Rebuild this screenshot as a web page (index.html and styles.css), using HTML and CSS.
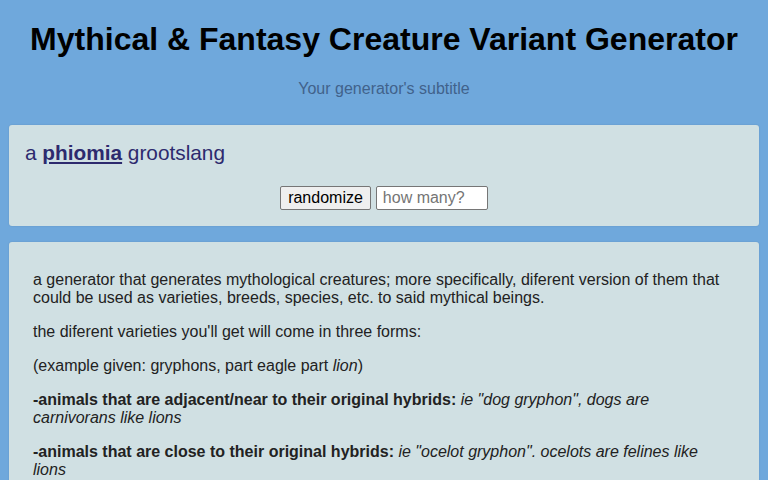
FILE: index.html
```html
<!DOCTYPE html>
<html>
<head>
<meta charset="utf-8">
<link rel="stylesheet" href="styles.css">
</head>
<body>
<h1 class="title">Mythical &amp; Fantasy Creature Variant Generator</h1>
<p class="subtitle">Your generator's subtitle</p>
<section class="card output-card">
  <div class="output">a <a class="term" href="#">phiomia</a> grootslang</div>
  <div class="controls">
    <button class="btn">randomize</button>
    <input class="count" type="text" placeholder="how many?">
  </div>
</section>
<section class="card info-card">
  <p>a generator that generates mythological creatures; more specifically, diferent version of them that could be used as varieties, breeds, species, etc. to said mythical beings.</p>
  <p>the diferent varieties you'll get will come in three forms:</p>
  <p>(example given: gryphons, part eagle part <i>lion</i>)</p>
  <p><b>-animals that are adjacent/near to their original hybrids:</b> <i>ie "dog gryphon", dogs are carnivorans like lions</i></p>
  <p><b>-animals that are close to their original hybrids:</b> <i>ie "ocelot gryphon". ocelots are felines like lions</i></p>
</section>
</body>
</html>
```
FILE: styles.css
```css
html, body {
  margin: 0;
  padding: 0;
}
body {
  background: #6fa8dc;
  font-family: "Liberation Sans", Arial, sans-serif;
  padding: 0 9px;
  overflow: hidden;
  height: 480px;
}
.title {
  font-size: 32px;
  font-weight: bold;
  text-align: center;
  color: #000;
  margin: 21px 0 22px;
  line-height: 37px;
}
.subtitle {
  text-align: center;
  font-size: 16px;
  line-height: 18px;
  color: #41628b;
  margin: 0 0 27px;
}
.card {
  background: #d0e0e3;
  border-radius: 3px;
  box-shadow: 0 0 2px rgba(0,0,0,0.12);
}
.output-card {
  padding: 16px 16px 16px;
  margin-bottom: 16px;
}
.output {
  font-size: 20.8px;
  line-height: 24px;
  color: #2d2a6e;
}
.term {
  color: #2d2a6e;
  font-weight: bold;
}
.controls {
  display: flex;
  justify-content: center;
  gap: 5px;
  margin-top: 21px;
}
.btn {
  font-family: "Liberation Sans", Arial, sans-serif;
  font-size: 16px;
  height: 24px;
  padding: 0 7px;
  background: #efefef;
  border: 1px solid #767676;
  border-radius: 2px;
  color: #000;
}
.count {
  font-family: "Liberation Sans", Arial, sans-serif;
  font-size: 16px;
  height: 24px;
  width: 112px;
  box-sizing: border-box;
  padding: 1px 6px;
  border: 1px solid #767676;
  border-radius: 2px;
  background: #fff;
}
.count::placeholder {
  color: #757575;
}
.info-card {
  padding: 13px 24px 12px;
  color: #222;
  font-size: 16px;
  line-height: 18px;
}
.info-card p {
  margin: 16px 0;
}
```
